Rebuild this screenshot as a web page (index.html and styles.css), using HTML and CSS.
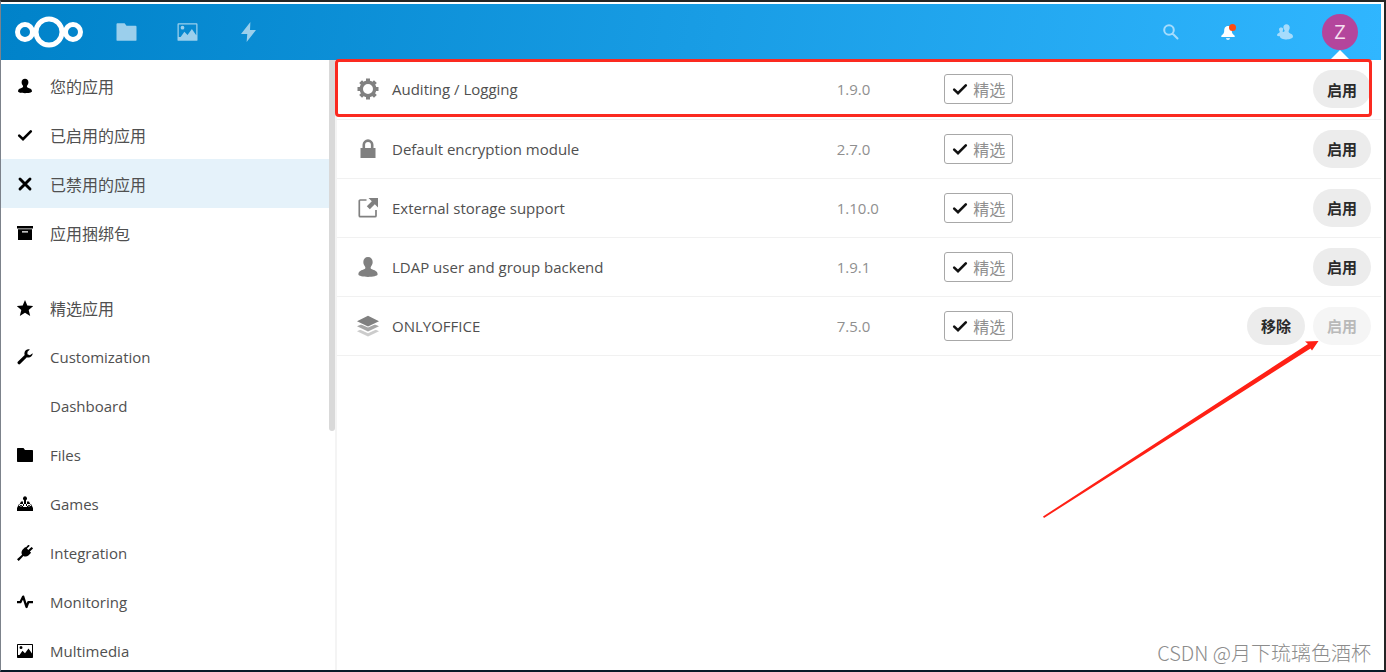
FILE: index.html
```html
<!DOCTYPE html>
<html lang="zh-CN">
<head>
<meta charset="utf-8">
<title>已禁用的应用</title>
<link rel="stylesheet" href="styles.css">
</head>
<body>
<svg class="sprite" aria-hidden="true">
  <symbol id="user" viewBox="0 0 16 16"><path d="M8 .8C5.900.8 4.600 2.300 4.600 4.300c0 1.500.6 2.400 1.200 3.300.5.800.3 1.600-.3 1.900C3.300 10.400 1 11 1 13.300c0 1.300 3.500 1.900 7 1.900s7-.6 7-1.900c0-2.300-2.300-2.900-4.500-3.800-.6-.3-.8-1.100-.3-1.900.6-.9 1.200-1.800 1.200-3.300C11.400 2.300 10.100.8 8 .8z"/></symbol>
  <symbol id="check" viewBox="0 0 16 16"><path d="M2.200 8.600 6 12.200 13.800 4.400" fill="none" stroke="currentColor" stroke-width="2.600" stroke-linecap="round"/></symbol>
  <symbol id="close" viewBox="0 0 16 16"><path d="M3 3 13 13M13 3 3 13" fill="none" stroke="currentColor" stroke-width="2.900" stroke-linecap="round"/></symbol>
  <symbol id="archive" viewBox="0 0 16 16"><path fill-rule="evenodd" d="M0 1h16v2.500H0zM1 4.300h14V15H1zM5 6.300v1.200h6V6.300z"/></symbol>
  <symbol id="star" viewBox="0 0 16 16"><path d="M8 0 10.300 5.500 16.300 6 11.700 9.900 13.200 16 8 12.700 2.800 16 4.300 9.900-.3 6 5.700 5.500z"/></symbol>
  <symbol id="wrench" viewBox="0 0 16 16"><path d="M12.800.5C10.500-.3 7.600 1.300 7.400 4.300c0 .7.100 1.200.3 1.700L.8 12.700c-1.200 1.300.9 3.500 2.300 2.400L9.900 8.300c2.700 1 5.800-.8 5.800-4l-2.900 1.900-2.400-.9.100-2.500z"/></symbol>
  <symbol id="folder" viewBox="0 0 16 16"><path d="M.7 1C.3 1 0 1.300 0 1.700v12.600c0 .4.300.7.7.7h14.600c.4 0 .7-.3.7-.7V3.700c0-.4-.3-.7-.7-.7H8L6.500 1z"/></symbol>
  <symbol id="games" viewBox="0 0 16 16"><path fill-rule="evenodd" d="M8 .3a2.100 2.100 0 0 0-1 3.900V10h2V4.200A2.100 2.100 0 0 0 8 .3zM4 5.500h2V11h4V5.500h2L14.200 10H1.800zM2 8l-2 4v3h16v-3l-2-4zM3.200 9h1.600v1.500H3.200zm8 0h1.600v1.500h-1.600z"/></symbol>
  <symbol id="plug" viewBox="0 0 16 16"><path d="M8.300 1.900 5.500 4.700c-1.300 1.700-1.200 3.500-.5 5L0 14.300 1.700 16l4.700-5c1.800.8 3.500.7 5-.6l2.700-2.700-1.200-1.200 3.200-3.100-1.600-1.500-3.200 3.100L9.900 3.600l2.900-2.800L11.300-.2 8.800 2.400z"/></symbol>
  <symbol id="pulse" viewBox="0 0 16 16"><path d="M0 8.200h3.400L6.200 2.600 9.500 13l1.800-4.800H16" fill="none" stroke="currentColor" stroke-width="2.300" stroke-linejoin="round"/></symbol>
  <symbol id="image" viewBox="0 0 16 16"><path fill-rule="evenodd" d="M.7 1C.3 1 0 1.300 0 1.700v12.600c0 .4.300.7.7.7h14.600c.4 0 .7-.3.7-.7V1.700c0-.4-.3-.7-.7-.7zM1 2h14v8.500l-3.500-5L8 10.300 5.500 7.800 2.500 12H1zM4 3a1.500 1.500 0 1 0 0 3 1.500 1.500 0 0 0 0-3z"/></symbol>
  <symbol id="bolt" viewBox="0 0 16 16"><path d="M9.500 0 2 9.500h5L6.500 16 14 6.300H9.200z"/></symbol>
  <symbol id="search" viewBox="0 0 16 16"><path d="M6 1.200a4.800 4.800 0 1 1 0 9.600 4.800 4.800 0 0 1 0-9.600zM9.500 9.500l5 5" fill="none" stroke="currentColor" stroke-width="2" stroke-linecap="round"/></symbol>
  <symbol id="bell" viewBox="0 0 16 16"><path d="M8 2C5 2 4.200 4.500 4.200 7c0 2-.8 3-2.900 4.700V13h13.400v-1.300C12.600 10 11.800 9 11.800 7c0-2.500-.8-5-3.800-5zM6 14.200h4c-.3 2-3.700 2-4 0z"/></symbol>
  <symbol id="contacts" viewBox="0 0 16 16"><path d="M9.400.3c-2 0-3 1.400-3 3 0 1.300.5 2 1 2.800.5 1-.1 1.700-.7 2L5.500 7.400c.5-.9.700-1.500.7-2.300C6.200 2.900 2 2.900 2 5.200c0 1 .3 1.500.7 2.300.2.500 0 .9-.5 1.200C1 9.400 0 9.900 0 11.200c0 .7 1.500 1 3 1.100-.3 4.100 13 4.100 13 .3 0-2.200-1.700-2.800-3.600-3.700-.8-.4-1.100-1.400-.6-2.300.5-.9.900-1.700.9-3 0-1.900-1.200-3.300-3.300-3.300z"/></symbol>
  <symbol id="gear" viewBox="0 0 22 22"><g fill="none" stroke="currentColor"><circle cx="11" cy="11" r="6.700" stroke-width="3.400"/><path d="M11 .5V4M11 18v3.500M.5 11H4M18 11h3.500M3.600 3.600 6 6M16 16l2.400 2.400M3.600 18.400 6 16M16 6l2.400-2.400" stroke-width="4"/></g></symbol>
  <symbol id="lock" viewBox="0 0 22 22"><path fill-rule="evenodd" d="M11 1.300A5.500 5.500 0 0 0 5.500 6.800V10H3.500v10h15V10h-2V6.800A5.500 5.500 0 0 0 11 1.300zm0 2.600a2.900 2.900 0 0 1 2.900 2.900V10H8.100V6.800A2.900 2.900 0 0 1 11 3.900z"/></symbol>
  <symbol id="external" viewBox="0 0 22 22"><path d="M9.500 3H3.300a1 1 0 0 0-1 1v14.700a1 1 0 0 0 1 1H18a1 1 0 0 0 1-1V13" fill="none" stroke="currentColor" stroke-width="1.700"/><path d="M11.500 1H21v9.500l-3.200-3.200-5 5-3-3 5-5z"/></symbol>
  <symbol id="layers" viewBox="0 0 22 22"><path opacity=".4" d="M0 16.200 11 11l11 5.200L11 21.500z"/><path fill="#fff" d="M0 13.200 11 9l11 4.200-11 5z"/><path opacity=".7" d="M0 11.200 11 6.500l11 4.700-11 5.300z"/><path fill="#fff" d="M0 7.700 11 3l11 4.700-11 4.800z"/><path d="M0 6.200 11 .8l11 5.400-11 5.200z"/></symbol>
</svg>

<div class="window">
  <header class="topbar">
    <a class="logo" href="#" aria-label="Nextcloud">
      <svg width="70" height="34" viewBox="0 0 70 34"><g fill="none" stroke="#fff" stroke-width="5"><circle cx="35" cy="17" r="13"/><circle cx="11" cy="17" r="7.500"/><circle cx="59" cy="17" r="7.500"/></g></svg>
    </a>
    <nav class="apps" aria-label="应用">
      <a href="#" aria-label="文件"><svg class="icon-app"><use href="#folder"/></svg></a>
      <a href="#" aria-label="照片"><svg class="icon-app"><use href="#image"/></svg></a>
      <a href="#" aria-label="动态"><svg class="icon-app"><use href="#bolt"/></svg></a>
    </nav>
    <div class="tools">
      <button type="button" aria-label="搜索"><svg class="icon"><use href="#search"/></svg></button>
      <button type="button" class="alerts" aria-label="通知"><svg class="icon"><use href="#bell"/></svg><span class="dot"></span></button>
      <button type="button" aria-label="联系人"><svg class="icon"><use href="#contacts"/></svg></button>
      <button type="button" class="account"><span class="avatar">Z</span></button>
    </div>
  </header>

  <div class="body">
    <nav class="sidebar" aria-label="应用分类">
      <ul>
        <li><a href="#"><svg class="icon"><use href="#user"/></svg>您的应用</a></li>
        <li><a href="#"><svg class="icon"><use href="#check"/></svg>已启用的应用</a></li>
        <li><a class="active" href="#"><svg class="icon"><use href="#close"/></svg>已禁用的应用</a></li>
        <li><a href="#"><svg class="icon"><use href="#archive"/></svg>应用捆绑包</a></li>
      </ul>
      <ul>
        <li><a href="#"><svg class="icon"><use href="#star"/></svg>精选应用</a></li>
        <li><a class="latin" href="#"><svg class="icon"><use href="#wrench"/></svg>Customization</a></li>
        <li><a class="latin" href="#"><svg class="icon"></svg>Dashboard</a></li>
        <li><a class="latin" href="#"><svg class="icon"><use href="#folder"/></svg>Files</a></li>
        <li><a class="latin" href="#"><svg class="icon"><use href="#games"/></svg>Games</a></li>
        <li><a class="latin" href="#"><svg class="icon"><use href="#plug"/></svg>Integration</a></li>
        <li><a class="latin" href="#"><svg class="icon"><use href="#pulse"/></svg>Monitoring</a></li>
        <li><a class="latin" href="#"><svg class="icon"><use href="#image"/></svg>Multimedia</a></li>
      </ul>
      <div class="thumb"></div>
    </nav>

    <main class="content">
      <table class="app-list">
        <colgroup><col class="c-icon"><col class="c-name"><col class="c-version"><col><col></colgroup>
        <tbody>
          <tr><td class="glyph"><svg><use href="#gear"/></svg></td><td>Auditing / Logging</td><td class="version">1.9.0</td><td><span class="badge"><svg class="icon"><use href="#check"/></svg>精选</span></td><td class="actions"><button type="button">启用</button></td></tr>
          <tr><td class="glyph"><svg><use href="#lock"/></svg></td><td>Default encryption module</td><td class="version">2.7.0</td><td><span class="badge"><svg class="icon"><use href="#check"/></svg>精选</span></td><td class="actions"><button type="button">启用</button></td></tr>
          <tr><td class="glyph"><svg><use href="#external"/></svg></td><td>External storage support</td><td class="version">1.10.0</td><td><span class="badge"><svg class="icon"><use href="#check"/></svg>精选</span></td><td class="actions"><button type="button">启用</button></td></tr>
          <tr><td class="glyph"><svg><use href="#user"/></svg></td><td>LDAP user and group backend</td><td class="version">1.9.1</td><td><span class="badge"><svg class="icon"><use href="#check"/></svg>精选</span></td><td class="actions"><button type="button">启用</button></td></tr>
          <tr><td class="glyph"><svg><use href="#layers"/></svg></td><td>ONLYOFFICE</td><td class="version">7.5.0</td><td><span class="badge"><svg class="icon"><use href="#check"/></svg>精选</span></td><td class="actions"><button type="button">移除</button><button type="button" disabled>启用</button></td></tr>
        </tbody>
      </table>
      <div class="highlight"></div>
      <svg class="arrow" width="276" height="178" viewBox="0 0 276 178" aria-hidden="true"><path fill="#ff2015" d="M0 176.500 265 4 262 1.500 275.500 1 269 10.500 267.500 8.500 1 178z"/></svg>
      <div class="watermark">CSDN @月下琉璃色酒杯</div>
    </main>
  </div>
</div>
</body>
</html>
```
FILE: styles.css
```css
* { box-sizing: border-box; }

body {
  margin: 0;
  background: #fff;
  color: #505050;
  font-family: "Open Sans", "Noto Sans CJK SC", sans-serif;
  font-size: 15px;
}

a { color: inherit; text-decoration: none; }
button { border: 0; padding: 0; background: none; color: inherit; font: inherit; }
svg { display: block; fill: currentColor; }
.sprite { position: absolute; width: 0; height: 0; }
.icon { width: 16px; height: 16px; flex: none; overflow: visible; }

.window {
  display: flex;
  flex-direction: column;
  height: 100vh;
  padding: 2px 3px 0 0;
  border: solid #252525;
  border-width: 2px 2px 2px 1px;
  border-left-color: #7c828b;
  border-bottom-color: #081a26;
  overflow: hidden;
}

.topbar {
  display: flex;
  align-items: center;
  flex: none;
  height: 56px;
  padding: 0 23px 0 13px;
  background: linear-gradient(100deg, #0082c9 0%, #30b6ff 100%);
  color: #fff;
}

.apps { display: flex; gap: 40px; margin-left: 32px; color: #9bcfec; }
.icon-app { width: 21px; height: 20px; }

.tools { display: flex; align-items: center; gap: 41px; margin-left: auto; color: #a6dcfc; }
.tools .alerts { position: relative; color: #fff; }
.dot {
  position: absolute;
  top: 0;
  right: 0;
  width: 7px;
  height: 7px;
  border-radius: 50%;
  background: #ff4a10;
}
.tools .account { position: relative; margin-left: -12px; }
.account::after {
  content: "";
  position: absolute;
  bottom: -10px;
  left: 8px;
  border: 10px solid transparent;
  border-top: 0;
  border-bottom-color: #fff;
}
.avatar {
  display: block;
  width: 36px;
  height: 36px;
  border-radius: 50%;
  background: #b4459c;
  color: #f5dff0;
  font-size: 20px;
  line-height: 36px;
}

.body { display: flex; flex: 1; min-height: 0; }

.sidebar {
  position: relative;
  flex: none;
  width: 336px;
  border-right: 2px solid #f4f4f4;
  overflow: hidden;
}
.sidebar ul { margin: 0; padding: 1px 6px 0 0; list-style: none; }
.sidebar ul + ul { margin-top: 25px; }
.sidebar a {
  display: flex;
  align-items: center;
  gap: 17px;
  height: 49px;
  padding-left: 16px;
  font-size: 16px;
}
.sidebar .latin { font-size: 15px; }
.sidebar .icon { color: #000; }
.sidebar .active { background: #e5f2fa; }
.thumb {
  position: absolute;
  top: 0;
  right: 0;
  width: 6px;
  height: 371px;
  border-radius: 0 0 3px 3px;
  background: #d9d9d9;
}

.content { position: relative; flex: 1; min-width: 0; }

.app-list { width: 100%; border-collapse: collapse; table-layout: fixed; }
.c-icon { width: 55px; }
.c-name { width: 42.6%; }
.c-version { width: 10.3%; }
.app-list td { height: 59px; padding: 0; border-bottom: 1px solid #f1f1f1; white-space: nowrap; }
.glyph svg { width: 22px; height: 22px; margin-left: 20px; color: #808080; }
.app-list .version { color: #8f8f8f; }

.badge {
  display: inline-flex;
  align-items: center;
  gap: 5px;
  height: 30px;
  padding: 0 7px;
  border: 1px solid #a8a8a8;
  border-radius: 3px;
  color: #8f8f8f;
  font-size: 16px;
  vertical-align: middle;
}
.badge .icon { color: #111; }

.app-list .actions { padding-right: 10px; text-align: right; }
.actions button {
  width: 58px;
  height: 38px;
  margin-left: 8px;
  border-radius: 19px;
  background: #ececec;
  color: #2a2a2a;
  font-weight: 700;
  vertical-align: middle;
}
.actions button:disabled { background: #f5f5f5; color: #b9b9b9; }

.highlight {
  position: absolute;
  top: -1px;
  left: -2px;
  right: 9px;
  height: 58px;
  border: 3px solid #fb2a20;
  border-radius: 4px;
}
.arrow { position: absolute; top: 280px; right: 62px; }
.watermark {
  position: absolute;
  right: 10px;
  bottom: 2px;
  color: #8c8c8c;
  font-family: "Noto Sans CJK SC", sans-serif;
  font-size: 20px;
  font-weight: 300;
  line-height: 30px;
}
```
